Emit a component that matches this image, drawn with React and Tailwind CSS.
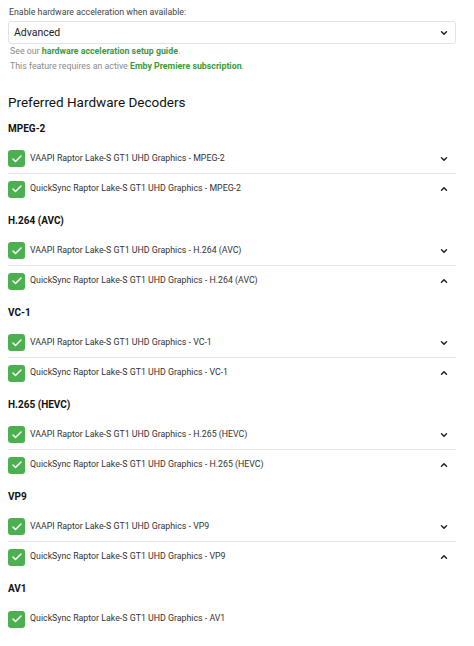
import { ChevronDown, ChevronUp, Check } from 'lucide-react';

const codecs = [
  { name: 'MPEG-2', devices: ['VAAPI', 'QuickSync'] },
  { name: 'H.264 (AVC)', devices: ['VAAPI', 'QuickSync'] },
  { name: 'VC-1', devices: ['VAAPI', 'QuickSync'] },
  { name: 'H.265 (HEVC)', devices: ['VAAPI', 'QuickSync'] },
  { name: 'VP9', devices: ['VAAPI', 'QuickSync'] },
  { name: 'AV1', devices: ['QuickSync'] },
];

function DecoderRow({ label, last, single }) {
  return (
    <div className={`flex items-center h-[30px] ${last ? '' : 'border-b border-[#e6e6e6]'}`}>
      <div className="w-[17px] h-[17px] rounded-[3px] bg-[#4caf50] flex items-center justify-center shrink-0">
        <Check size={12} strokeWidth={3} className="text-white" />
      </div>
      <span className="ml-[5px] text-[8.8px] text-[#333]">{label}</span>
      {!single && (
        <span className="ml-auto mr-[7px] text-[#222]">
          {last ? <ChevronUp size={10} strokeWidth={3.5} /> : <ChevronDown size={10} strokeWidth={3.5} />}
        </span>
      )}
    </div>
  );
}

export default function App() {
  return (
    <div className="min-h-screen bg-white px-[8px] pt-[5px] w-[464px] font-['Roboto',sans-serif]">
      <div className="text-[8.8px] leading-[14px] text-[#444] ml-[1px]">Enable hardware acceleration when available:</div>
      <div className="mt-[2px] h-[23px] border border-[#e2e2e2] rounded-[3px] flex items-center px-[5px]">
        <span className="text-[10.5px] text-[#222]">Advanced</span>
        <ChevronDown size={10} strokeWidth={3.5} className="ml-auto mr-[1px] text-[#222]" />
      </div>
      <div className="text-[8.8px] text-[#8a8a8a] ml-[2px] leading-[15px]">
        See our <span className="font-bold text-[#3a9a3a]">hardware acceleration setup guide</span>.
      </div>
      <div className="text-[8.8px] text-[#8a8a8a] ml-[2px] leading-[15px]">
        This feature requires an active <span className="font-bold text-[#3a9a3a]">Emby Premiere subscription</span>.
      </div>

      <h2 className="mt-[18px] text-[13.5px] text-[#111] leading-[20px]">Preferred Hardware Decoders</h2>

      {codecs.map((c) => (
        <div key={c.name}>
          <h3 className="mt-[7px] text-[10px] font-bold text-[#111] leading-[20px]">{c.name}</h3>
          <div className="mt-[5px]">
            {c.devices.map((d, i) => (
              <DecoderRow
                key={d}
                label={`${d} Raptor Lake-S GT1 UHD Graphics - ${c.name}`}
                last={i === c.devices.length - 1}
                single={c.devices.length === 1}
              />
            ))}
          </div>
        </div>
      ))}
    </div>
  );
}
